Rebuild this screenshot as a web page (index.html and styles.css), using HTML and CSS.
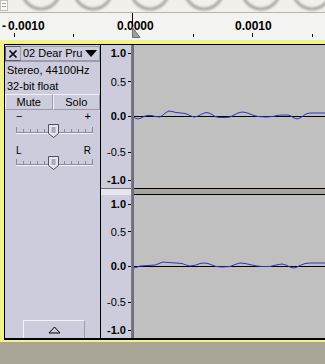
FILE: index.html
```html
<!DOCTYPE html>
<html>
<head>
<meta charset="utf-8">
<link rel="stylesheet" href="styles.css">
</head>
<body>
<div class="toolbar">
  <div class="grabber"><span></span><span></span></div>
  <svg class="knobs" width="317" height="12" viewBox="8 0 317 12">
    <defs><filter id="bl"><feGaussianBlur stdDeviation="0.9"/></filter></defs>
    <g fill="none" stroke="#a9a9a9" stroke-width="3" filter="url(#bl)">
      <circle cx="41" cy="-10" r="19"/>
      <circle cx="93" cy="-10" r="19"/>
      <circle cx="150" cy="-10" r="19"/>
      <circle cx="204" cy="-10" r="19"/>
      <circle cx="261" cy="-10" r="19"/>
      <circle cx="312" cy="-10" r="19"/>
    </g>
  </svg>
</div>
<div class="ruler">
  <span class="rlabel" style="left:2px"><span class="minus">-</span>0.0010</span>
  <span class="rlabel" style="left:117px">0.0000</span>
  <span class="rlabel" style="left:235px">0.0010</span>
  <span class="tick major" style="left:14px"></span>
  <span class="tick" style="left:73px"></span>
  <span class="tick major" style="left:133px"></span>
  <span class="tick" style="left:193px"></span>
  <span class="tick major" style="left:252px"></span>
  <span class="tick" style="left:312px"></span>
  <span class="playhead"></span>
  <svg class="marker" width="9" height="11" viewBox="0 0 9 11"><polygon points="0.5,0.5 8,10.5 0.5,10.5" fill="#a0a0a0" stroke="#707070"/></svg>
</div>
<div class="focus">
  <div class="track">
    <div class="panel">
      <div class="namerow">
        <div class="closebox"><svg width="10" height="10" viewBox="0 0 10 10"><path d="M1.5 1.5 L8.5 8.5 M8.5 1.5 L1.5 8.5" stroke="#000" stroke-width="1.6"/></svg></div>
        <div class="namebtn"><span>02 Dear Pru</span><svg width="12" height="7" viewBox="0 0 12 7"><polygon points="0,0 12,0 6,7" fill="#000"/></svg></div>
      </div>
      <div class="info">
        <div>Stereo, 44100Hz</div>
        <div>32-bit float</div>
      </div>
      <div class="btnrow">
        <div class="btn">Mute</div>
        <div class="btn">Solo</div>
      </div>
      <div class="slabels gain"><span>&minus;</span><span>+</span></div>
      <div class="slider">
        <svg width="78" height="16" viewBox="0 0 78 16">
          <line x1="0" y1="9.5" x2="77" y2="9.5" stroke="#8c8c9c"/>
          <line x1="0" y1="10.5" x2="77" y2="10.5" stroke="#f4f4f8"/>
          <g stroke="#8c8c9c">
            <line x1="0.5" y1="4" x2="0.5" y2="9"/>
            <line x1="7.5" y1="6" x2="7.5" y2="9"/>
            <line x1="14.5" y1="6" x2="14.5" y2="9"/>
            <line x1="21.5" y1="6" x2="21.5" y2="9"/>
            <line x1="28.5" y1="6" x2="28.5" y2="9"/>
            <line x1="48.5" y1="6" x2="48.5" y2="9"/>
            <line x1="55.5" y1="6" x2="55.5" y2="9"/>
            <line x1="62.5" y1="6" x2="62.5" y2="9"/>
            <line x1="69.5" y1="6" x2="69.5" y2="9"/>
            <line x1="76.5" y1="4" x2="76.5" y2="9"/>
          </g>
          <g transform="translate(32.5,1.5)">
            <polygon points="0,0 10,0 10,9 5,13 0,9" fill="#e4e4ee" stroke="#505060"/>
            <g stroke="#707080"><line x1="3" y1="3.5" x2="7" y2="3.5"/><line x1="3" y1="5.5" x2="7" y2="5.5"/><line x1="3" y1="7.5" x2="7" y2="7.5"/></g>
          </g>
        </svg>
      </div>
      <div class="slabels pan"><span>L</span><span>R</span></div>
      <div class="slider">
        <svg width="78" height="16" viewBox="0 0 78 16">
          <line x1="0" y1="9.5" x2="77" y2="9.5" stroke="#8c8c9c"/>
          <line x1="0" y1="10.5" x2="77" y2="10.5" stroke="#f4f4f8"/>
          <g stroke="#8c8c9c">
            <line x1="0.5" y1="4" x2="0.5" y2="9"/>
            <line x1="7.5" y1="6" x2="7.5" y2="9"/>
            <line x1="14.5" y1="6" x2="14.5" y2="9"/>
            <line x1="21.5" y1="6" x2="21.5" y2="9"/>
            <line x1="28.5" y1="6" x2="28.5" y2="9"/>
            <line x1="48.5" y1="6" x2="48.5" y2="9"/>
            <line x1="55.5" y1="6" x2="55.5" y2="9"/>
            <line x1="62.5" y1="6" x2="62.5" y2="9"/>
            <line x1="69.5" y1="6" x2="69.5" y2="9"/>
            <line x1="76.5" y1="4" x2="76.5" y2="9"/>
          </g>
          <g transform="translate(32.5,1.5)">
            <polygon points="0,0 10,0 10,9 5,13 0,9" fill="#e4e4ee" stroke="#505060"/>
            <g stroke="#707080"><line x1="3" y1="3.5" x2="7" y2="3.5"/><line x1="3" y1="5.5" x2="7" y2="5.5"/><line x1="3" y1="7.5" x2="7" y2="7.5"/></g>
          </g>
        </svg>
      </div>
      <div class="spacer"></div>
      <div class="collapse"><svg width="13" height="8" viewBox="0 0 13 8"><polygon points="1,7 6.5,1 12,7" fill="none" stroke="#000"/></svg></div>
    </div>
    <div class="vruler">
      <div class="vscale">
        <span class="vl b" style="top:2px">1.0</span><span class="vt" style="top:8px"></span>
        <span class="vl" style="top:31px">0.5</span><span class="vt" style="top:36px"></span>
        <span class="vl b" style="top:65px">0.0</span><span class="vt" style="top:71px"></span>
        <span class="vl" style="top:101px">-0.5</span><span class="vt" style="top:107px"></span>
        <span class="vl b" style="top:129px">-1.0</span><span class="vt" style="top:135px"></span>
      </div>
      <div class="vgap"></div>
      <div class="vscale">
        <span class="vl b" style="top:3px">1.0</span><span class="vt" style="top:9px"></span>
        <span class="vl" style="top:31px">0.5</span><span class="vt" style="top:36px"></span>
        <span class="vl b" style="top:65px">0.0</span><span class="vt" style="top:71px"></span>
        <span class="vl" style="top:101px">-0.5</span><span class="vt" style="top:107px"></span>
        <span class="vl b" style="top:129px">-1.0</span><span class="vt" style="top:135px"></span>
      </div>
    </div>
    <div class="waves">
      <svg class="chan" width="191" height="143" viewBox="134 45 191 143">
        <line x1="134" y1="116.5" x2="325" y2="116.5" stroke="#000"/>
        <polyline fill="none" stroke="#3232c8" stroke-width="1" stroke-linejoin="round" points="133,116.7 135,118 138,119 141,118 144,116.5 147,115.5 152,115.5 155,116.5 160,117 163,115 166,112.5 169,111 172,111.5 176,112.5 181,113 185,113.5 188,114.5 191,116 194,117 197,116.5 200,115 203,113.5 206,112.5 209,113 212,114.5 215,116.5 219,117.5 226,117.5 230,117 234,115 238,113 242,112 246,112.5 250,114 254,115.5 258,116.5 266,117 273,116.5 277,115.5 282,115 288,115 291,116 294,118 297,119 300,118 303,116 306,114 310,113 325,113"/>
      </svg>
      <div class="wgap"></div>
      <svg class="chan" width="191" height="143" viewBox="134 195 191 143">
        <line x1="134" y1="266.5" x2="325" y2="266.5" stroke="#000"/>
        <polyline fill="none" stroke="#3232c8" stroke-width="1" stroke-linejoin="round" points="133,268 136,267.5 140,266 148,265.5 155,265 159,263.5 163,262 168,262.5 176,263 182,263.5 186,265 190,266 196,265 200,263.5 204,263 208,263.5 212,265 216,266.5 222,267 230,266.5 235,264.5 240,263 245,263.5 252,265 257,266 262,266.5 270,266.5 276,265 282,264 286,265 290,267 293,268 296,267.5 300,265.5 305,263.5 310,263 325,263"/>
      </svg>
    </div>
  </div>
</div>
</body>
</html>
```
FILE: styles.css
```css
html, body {
  margin: 0;
  padding: 0;
}
body {
  width: 325px;
  height: 364px;
  overflow: hidden;
  background: #a9a698;
  font-family: "Liberation Sans", Arial, sans-serif;
  color: #000;
}
.toolbar {
  height: 12px;
  background: #f1f0ea;
  border-bottom: 1px solid #b8b6a8;
  display: flex;
  overflow: hidden;
}
.grabber {
  border: 1px solid #c4c2b4;
  background: #f8f8f4;
  display: flex;
  flex-direction: column;
  gap: 2px;
  padding: 2px 1px 0;
  box-sizing: border-box;
  width: 8px;
  height: 11px;
}
.grabber span {
  height: 1px;
  background: #a8a698;
}
.knobs {
  display: block;
}
.ruler {
  height: 27px;
  background: #f3f3f1;
  position: relative;
  overflow: hidden;
}
.rlabel {
  position: absolute;
  top: 6px;
  font-size: 12px;
  font-weight: bold;
  line-height: 14px;
}
.minus {
  margin-right: 2px;
}
.tick {
  position: absolute;
  width: 1px;
  height: 3px;
  top: 21px;
  background: #000;
}
.tick.major {
  height: 4px;
  top: 20px;
}
.playhead {
  position: absolute;
  left: 132px;
  top: 0;
  width: 1px;
  height: 20px;
  background: #000;
}
.marker {
  position: absolute;
  left: 132px;
  top: 14px;
}
.focus {
  background: #f2f28a;
  padding: 4px 0 2px 4px;
}
.track {
  display: flex;
  height: 293px;
  border-top: 1px solid #000;
  border-left: 1px solid #000;
  border-bottom: 2px solid #000;
}
.panel {
  width: 95px;
  flex: none;
  border-right: 1px solid #000;
  background: #ccccdc;
  display: flex;
  flex-direction: column;
  font-size: 11px;
}
.namerow {
  margin-top: 1px;
  height: 15px;
  display: flex;
}
.closebox {
  width: 16px;
  box-sizing: border-box;
  border: 1px solid #5a5a6a;
  border-right-color: #9c9cac;
  display: flex;
  align-items: center;
  justify-content: center;
}
.namebtn {
  flex: 1;
  box-sizing: border-box;
  border: 1px solid #9c9cac;
  border-left: none;
  display: flex;
  align-items: center;
  justify-content: space-between;
  padding: 0 2px 0 2px;
  line-height: 13px;
}
.namebtn svg {
  display: block;
}
.info {
  border-top: 1px solid #9c9cac;
  height: 32px;
  padding-left: 2px;
  line-height: 16px;
}
.btnrow {
  height: 16px;
  display: flex;
}
.btn {
  flex: 1;
  box-sizing: border-box;
  border: 1px solid #f0f0f6;
  border-right-color: #9c9cac;
  border-bottom-color: #9c9cac;
  text-align: center;
  line-height: 14px;
}
.slabels {
  display: flex;
  justify-content: space-between;
  margin: 0 9px 0 11px;
  height: 12px;
  line-height: 12px;
}
.slabels.gain {
  margin-top: 1px;
  line-height: 11px;
}
.slabels.pan {
  margin-top: 7px;
  height: 9px;
  line-height: 9px;
  font-size: 10px;
}
.slider {
  height: 16px;
  padding-left: 11px;
}
.slider svg {
  display: block;
}
.spacer {
  flex: 1;
}
.collapse {
  width: 62px;
  height: 18px;
  margin-left: 18px;
  box-sizing: border-box;
  border: 1px solid #f4f4f8;
  border-right-color: #9c9cac;
  border-bottom: none;
  display: flex;
  align-items: center;
  justify-content: center;
}
.collapse svg {
  display: block;
}
.vruler {
  width: 30px;
  flex: none;
  border-right: 1px solid #7c7c8c;
  background: #ccccdc;
  display: flex;
  flex-direction: column;
}
.vscale {
  height: 143px;
  position: relative;
}
.vgap {
  height: 6px;
  border-top: 1px solid #6c6c7c;
  background: #e6e6ee;
}
.vl {
  position: absolute;
  right: 5px;
  font-size: 11px;
  line-height: 12px;
}
.vl.b {
  font-weight: bold;
}
.vt {
  position: absolute;
  right: 0;
  width: 3px;
  height: 1px;
  background: #000;
}
.waves {
  flex: 1;
  border-left: 2px solid #6e6e7e;
  background: #c0c0c0;
  display: flex;
  flex-direction: column;
  overflow: hidden;
}
.chan {
  display: block;
  flex: none;
}
.wgap {
  height: 5px;
  background: #a9a698;
  border-top: 1px solid #000;
  border-bottom: 1px solid #000;
}
```
